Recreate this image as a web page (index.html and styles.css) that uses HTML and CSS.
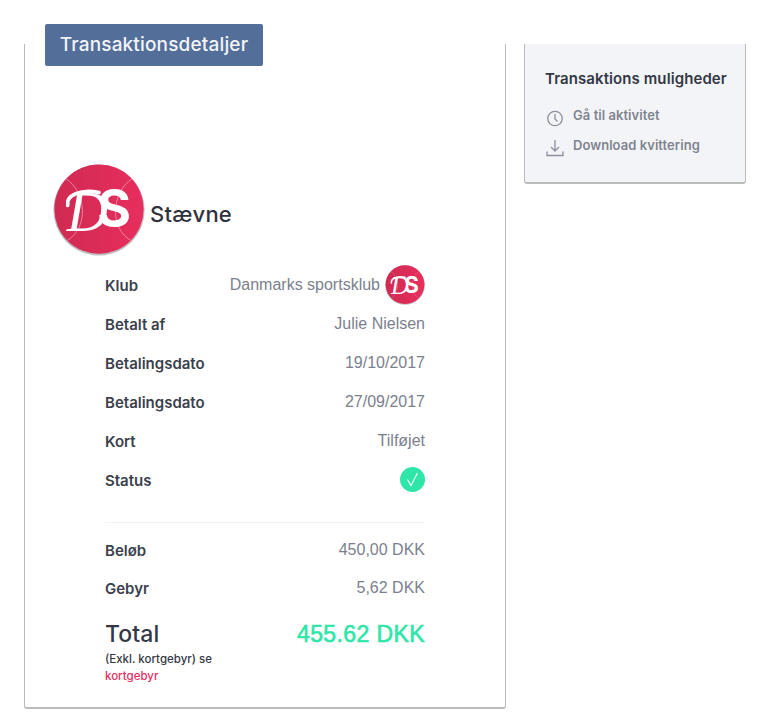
FILE: index.html
```html
<!DOCTYPE html>
<html lang="da">
<head>
<meta charset="utf-8">
<title>Transaktionsdetaljer</title>
<link rel="stylesheet" href="styles.css">
</head>
<body>
<div class="page">
  <main class="card">
    <h1 class="badge">Transaktionsdetaljer</h1>
    <div class="event">
      <svg class="logo logo-large" viewBox="0 0 100 100" aria-hidden="true">
        <use href="#ds"/>
      </svg>
      <h2 class="event-title">Stævne</h2>
    </div>
    <section class="rows">
      <div class="row"><span class="label">Klub</span><span class="value club">Danmarks sportsklub
        <svg class="logo logo-small" viewBox="0 0 100 100" aria-hidden="true"><use href="#ds"/></svg></span></div>
      <div class="row"><span class="label">Betalt af</span><span class="value">Julie Nielsen</span></div>
      <div class="row"><span class="label">Betalingsdato</span><span class="value">19/10/2017</span></div>
      <div class="row"><span class="label">Betalingsdato</span><span class="value">27/09/2017</span></div>
      <div class="row"><span class="label">Kort</span><span class="value">Tilføjet</span></div>
      <div class="row"><span class="label">Status</span>
        <svg class="status" viewBox="0 0 25 25" aria-hidden="true">
          <circle cx="12.5" cy="12.5" r="12.5" fill="#2ee6a8"/>
          <path d="M7.5 12.5 L11 18.5 L17.5 6" fill="none" stroke="#fff" stroke-width="1.1"/>
        </svg>
      </div>
    </section>
    <section class="amounts">
      <div class="row row-amount"><span class="label">Beløb</span><span class="value">450,00 DKK</span></div>
      <div class="row row-amount"><span class="label">Gebyr</span><span class="value">5,62 DKK</span></div>
    </section>
    <section class="total">
      <div class="total-left">
        <div class="total-label">Total</div>
        <p class="note">(Exkl. kortgebyr) se <span class="note-link">kortgebyr</span></p>
      </div>
      <div class="total-value">455.62 DKK</div>
    </section>
  </main>
  <aside class="side">
    <h3 class="side-title">Transaktions muligheder</h3>
    <a class="action">
      <svg class="icon" viewBox="0 0 18 18" aria-hidden="true">
        <circle cx="9" cy="9.5" r="7.2" fill="none" stroke="#8b8f9c" stroke-width="1.3"/>
        <path d="M9 5 V10 L11.5 12.5" fill="none" stroke="#8b8f9c" stroke-width="1.3"/>
      </svg>
      <span>Gå til aktivitet</span>
    </a>
    <a class="action">
      <svg class="icon" viewBox="0 0 18 18" aria-hidden="true">
        <path d="M9 1 V11.5 M5 8 L9 12 L13 8 M1 12.5 V16.5 H17 V12.5" fill="none" stroke="#8b8f9c" stroke-width="1.3"/>
      </svg>
      <span>Download kvittering</span>
    </a>
  </aside>
</div>
<svg class="defs" aria-hidden="true">
  <defs>
    <linearGradient id="ds-bg" x1="0" x2="1" y1="0" y2="0">
      <stop offset="0" stop-color="#cf2a52"/>
      <stop offset="1" stop-color="#e82e5e"/>
    </linearGradient>
    <g id="ds">
      <circle cx="50" cy="50" r="49.5" fill="#bdbdbd"/>
      <circle cx="50" cy="49" r="48.5" fill="url(#ds-bg)"/>
      <path d="M14 16 C36 30 40 70 14 84 M86 16 C64 30 60 70 86 84" fill="none" stroke="#f0a0b4" stroke-width="0.8"/>
      <path d="M16 45 C14 34 30 27 50 31" fill="none" stroke="#fff" stroke-width="4" stroke-linecap="round"/>
      <text class="logo-d" x="15" y="73">D</text>
      <text class="logo-s" x="48" y="69">S</text>
    </g>
  </defs>
</svg>
</body>
</html>
```
FILE: styles.css
```css
* { box-sizing: border-box; }
html, body { margin: 0; padding: 0; background: #fff; }
body { font-family: "Inter", "Liberation Sans", sans-serif; color: #343845; }
.defs { width: 0; height: 0; overflow: hidden; display: block; }
.page {
  display: flex;
  align-items: flex-start;
  gap: 18px;
  width: 760px;
  padding: 44px 14px 0 24px;
}
.card {
  position: relative;
  width: 482px;
  height: 665px;
  padding: 120px 80px 0 28px;
  border: solid #bcbcbc;
  border-width: 0 1px 2px;
  border-radius: 0 0 3px 3px;
  background: #fff;
}
.badge {
  position: absolute;
  left: 20px;
  top: -20px;
  width: 218px;
  margin: 0;
  font-size: 19px;
  font-weight: 500;
  letter-spacing: .16px;
  line-height: 42px;
  text-align: center;
  color: #f2f4f8;
  background: #536e99;
  border-radius: 2px;
}
.event { display: flex; align-items: center; gap: 5px; }
.logo { display: block; flex: none; }
.logo-large { width: 92px; height: 92px; }
.logo-small { width: 40px; height: 40px; }
.logo-d { font-family: "Liberation Serif", serif; font-style: italic; font-size: 62px; fill: #fff; }
.logo-s { font-family: "Inter", sans-serif; font-weight: 700; font-size: 56px; fill: #fff; }
.event-title { margin: 7px 0 0; font-size: 22px; font-weight: 500; letter-spacing: .2px; color: #2f323c; line-height: 24px; }
.rows { margin: 9px 0 0 52px; padding-bottom: 23px; border-bottom: 1px solid #f1f2f4; }
.row { display: flex; justify-content: space-between; align-items: center; height: 39px; }
.row-amount { height: 38px; }
.label { padding-top: 2px; font-size: 15px; font-weight: 600; color: #3b3f4c; }
.row-amount .label { padding-top: 0; }
.value { font-family: "Liberation Sans", sans-serif; font-size: 16px; color: #7b7f8e; }
.club { display: flex; align-items: center; gap: 5px; }
.status { width: 25px; height: 25px; display: block; }
.amounts { margin: 8px 0 0 52px; }
.total { margin: 13px 0 0 52px; display: flex; justify-content: space-between; align-items: flex-start; }
.total-left { width: 120px; }
.total-label { font-size: 23px; font-weight: 500; letter-spacing: .1px; line-height: 28px; color: #343845; }
.note { margin: 3px 0 0; font-size: 11.5px; line-height: 17px; font-weight: 500; color: #343845; }
.note-link { color: #e8305f; }
.total-value { font-family: "Liberation Sans", sans-serif; font-size: 23px; line-height: 28px; color: #2ee6a8; letter-spacing: .4px; -webkit-text-stroke: .6px #2ee6a8; }
.side {
  width: 222px;
  height: 140px;
  padding: 25px 10px 0 20px;
  background: #f3f4f8;
  border: solid #bcbcbc;
  border-width: 0 1px 2px;
  border-radius: 0 0 3px 3px;
}
.side-title { margin: 0 0 18px; font-size: 15px; font-weight: 600; letter-spacing: .09px; line-height: 20px; white-space: nowrap; color: #343845; }
.action { display: flex; align-items: flex-start; gap: 9px; height: 30px; padding-left: 1px; font-size: 13px; font-weight: 600; letter-spacing: .05px; color: #80848f; line-height: 17px; }
.icon { width: 18px; height: 18px; margin-top: 2px; flex: none; }
```
